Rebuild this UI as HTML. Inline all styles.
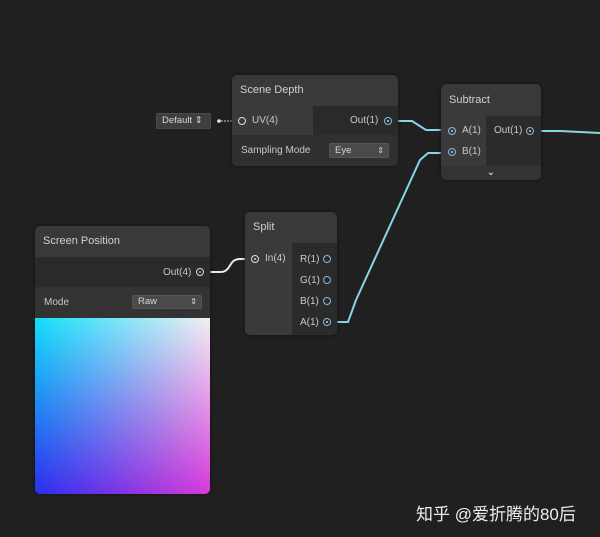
<!DOCTYPE html>
<html><head><meta charset="utf-8"><style>
body{margin:0;width:600px;height:537px;background:#202020;position:relative;overflow:hidden;font-family:"Liberation Sans","Noto Sans CJK SC",sans-serif;font-size:10px;color:#c8c8c8}
.n{position:absolute;background:#2b2b2b;border-radius:5px;overflow:hidden;box-shadow:0 0 3px #111}
.a{position:absolute}
.t{position:absolute;left:0;right:0;top:0;background:#393939;color:#d0d0d0;font-size:11px;padding-left:8px;box-sizing:border-box}
.dd{position:absolute;background:#4a4a4a;border-radius:2px;border:1px solid #555;color:#d8d8d8;font-size:9.5px;padding-left:5px;box-sizing:border-box}
.p{position:absolute;width:8px;height:8px;margin:-1px;border:1px solid #8bd;border-radius:50%;box-sizing:border-box}
.pf::after{content:"";position:absolute;left:2px;top:2px;width:2px;height:2px;background:#9de;border-radius:50%}
.pw{border-color:#ddd}
</style></head><body>
<svg class="a" style="left:0;top:0" width="600" height="537">
<g fill="none" stroke="#86d6e4" stroke-width="2">
<path d="M390 121 H412 L426 130 H448"/>
<path d="M530 131 H560 L600 133"/>
<path d="M337 322 H348 L356 300 L420 160 L428 153 H448"/>
</g>
<path d="M200 272 H220 C232 272 228 259 240 259 H256" fill="none" stroke="#f2e4ea" stroke-width="2"/>
<path d="M218 121 H236" stroke="#ccc" stroke-width="1" stroke-dasharray="2 1"/>
<circle cx="219" cy="121" r="1.8" fill="#eee"/>
</svg>
<div class="dd" style="left:156px;top:113px;width:55px;height:16px;line-height:14px;background:#3e3e3e;border-color:#4a4a4a">Default ⇕</div>

<div class="n" style="left:232px;top:75px;width:166px;height:91px">
<div class="t" style="height:31px;line-height:31px">Scene Depth</div>
<div class="a" style="left:0;top:31px;width:81px;height:29px;background:#3a3a3a"></div>
<div class="a" style="left:81px;top:31px;width:85px;height:29px;background:#2a2a2a"></div>
<div class="p pw" style="left:7px;top:43px"></div>
<div class="a" style="left:20px;top:40px">UV(4)</div>
<div class="a" style="left:118px;top:40px">Out(1)</div>
<div class="p pf" style="left:153px;top:43px"></div>
<div class="a" style="left:0;top:60px;width:166px;height:31px;background:#303030"></div>
<div class="a" style="left:9px;top:70px">Sampling Mode</div>
<div class="dd" style="left:97px;top:68px;width:60px;height:15px;line-height:13px">Eye<span style="position:absolute;right:4px;font-size:8px">⇕</span></div>
</div>

<div class="n" style="left:441px;top:84px;width:100px;height:96px">
<div class="t" style="height:32px;line-height:32px">Subtract</div>
<div class="a" style="left:0;top:32px;width:45px;height:50px;background:#3a3a3a"></div>
<div class="p pf" style="left:8px;top:44px"></div><div class="a" style="left:21px;top:41px">A(1)</div>
<div class="p pf" style="left:8px;top:65px"></div><div class="a" style="left:21px;top:62px">B(1)</div>
<div class="a" style="left:53px;top:41px">Out(1)</div>
<div class="p pf" style="left:86px;top:44px"></div>
<div class="a" style="left:0;top:82px;width:100px;height:14px;background:#333;text-align:center;color:#eee;font-size:10px;line-height:13px">⌄</div>
</div>

<div class="n" style="left:245px;top:212px;width:92px;height:123px">
<div class="t" style="height:31px;line-height:31px">Split</div>
<div class="a" style="left:0;top:31px;width:47px;height:92px;background:#3a3a3a"></div>
<div class="p pf pw" style="left:7px;top:44px"></div><div class="a" style="left:20px;top:41px">In(4)</div>
<div class="a" style="left:55px;top:42px">R(1)</div><div class="p" style="left:79px;top:44px"></div>
<div class="a" style="left:55px;top:63px">G(1)</div><div class="p" style="left:79px;top:65px"></div>
<div class="a" style="left:55px;top:84px">B(1)</div><div class="p" style="left:79px;top:86px"></div>
<div class="a" style="left:55px;top:105px">A(1)</div><div class="p pf" style="left:79px;top:107px"></div>
</div>

<div class="n" style="left:35px;top:226px;width:175px;height:268px">
<div class="t" style="height:31px;line-height:31px">Screen Position</div>
<div class="a" style="left:0;top:31px;width:175px;height:30px;background:#2a2a2a"></div>
<div class="a" style="left:128px;top:41px">Out(4)</div>
<div class="p pf pw" style="left:162px;top:43px"></div>
<div class="a" style="left:0;top:61px;width:175px;height:31px;background:#333"></div>
<div class="a" style="left:9px;top:71px">Mode</div>
<div class="dd" style="left:97px;top:69px;width:70px;height:14px;line-height:12px">Raw<span style="position:absolute;right:4px;font-size:8px">⇕</span></div>
<div class="a" style="left:0;top:92px;width:175px;height:176px;background:linear-gradient(to right,#2a2ef0,#d83ad8)"></div>
<div class="a" style="left:0;top:92px;width:175px;height:176px;background:linear-gradient(to right,#10e0fa,#f4eef4);-webkit-mask-image:linear-gradient(to bottom,#000,rgba(0,0,0,0));mask-image:linear-gradient(to bottom,#000,rgba(0,0,0,0))"></div>
</div>

<div class="a" style="left:416px;top:500px;font-size:17px;color:#eee;white-space:nowrap">知乎 @爱折腾的80后</div>
</body></html>
